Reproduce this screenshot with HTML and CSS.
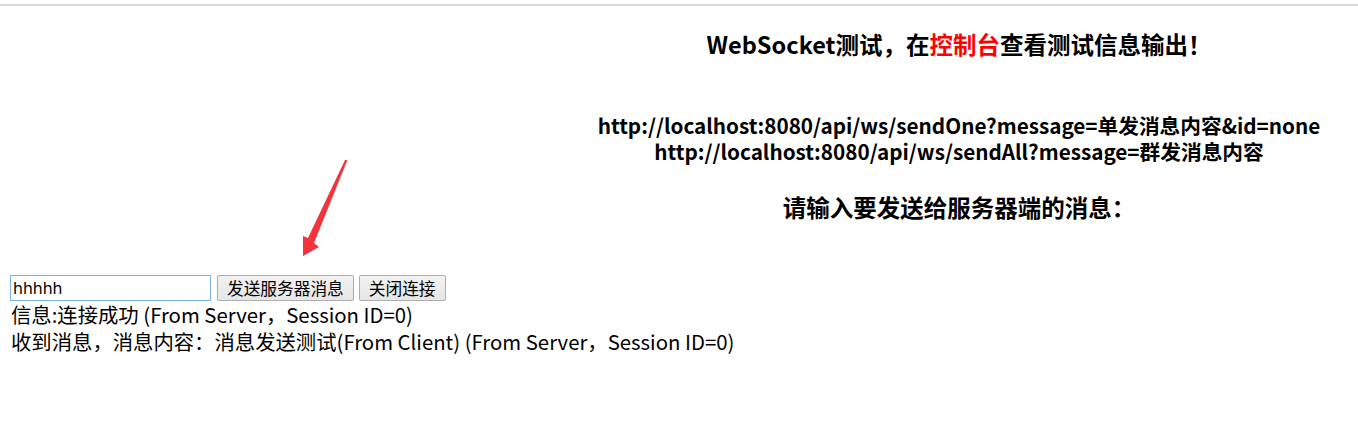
FILE: index.html
```html
<!DOCTYPE html>
<html lang="zh-CN">
<head>
    <meta charset="UTF-8">
    <title>WebSocket测试</title>
    <link rel="stylesheet" href="styles.css">
</head>
<body>
    <div class="top-line"></div>

    <!-- 说明 -->
    <div class="intro">
        <h3 class="title">WebSocket测试，在<span class="red">控制台</span>查看测试信息输出！</h3>
        <div class="urls">
            <div>http://localhost:8080/api/ws/sendOne?message=单发消息内容&amp;id=none</div>
            <div>http://localhost:8080/api/ws/sendAll?message=群发消息内容</div>
        </div>
        <h3 class="prompt">请输入要发送给服务器端的消息：</h3>
    </div>

    <!-- 操作 -->
    <div class="controls">
        <input type="text" id="text" class="msg-input" value="hhhhh">
        <button class="btn">发送服务器消息</button>
        <button class="btn">关闭连接</button>
    </div>

    <div class="messages" id="message">
        <div>信息:连接成功 (From Server，Session ID=0)</div>
        <div>收到消息，消息内容：消息发送测试(From Client) (From Server，Session ID=0)</div>
    </div>

    <!-- 标注箭头 -->
    <svg class="arrow" width="60" height="110" viewBox="0 0 60 110">
        <polygon points="57,10 55,10 18,88 13,86 13,106 29,97 24,93 57,11" fill="#f5333a"/>
    </svg>
</body>
</html>
```
FILE: styles.css
```css
* {
    margin: 0;
    padding: 0;
    box-sizing: border-box;
}

body {
    font-family: "Noto Sans CJK SC", "Noto Sans", sans-serif;
    color: #000;
    background: #fff;
    position: relative;
    min-height: 425px;
}

.top-line {
    height: 2px;
    margin-top: 4px;
    background-color: #d9d9d9;
}

/* 说明 */
.intro {
    margin-left: 560px;
    text-align: center;
}

.title {
    font-size: 23.5px;
    font-weight: bold;
    line-height: 30px;
    margin-top: 23px;
}

.red {
    color: #ff0000;
}

.urls {
    font-size: 20.7px;
    font-weight: bold;
    line-height: 26px;
    margin-top: 53px;
}

.prompt {
    font-size: 23.5px;
    font-weight: bold;
    line-height: 30px;
    margin-top: 28px;
}

/* 操作 */
.controls {
    display: flex;
    align-items: center;
    gap: 5px;
    margin-top: 53px;
    padding-left: 10px;
}

.msg-input {
    width: 201px;
    height: 26px;
    margin-right: 1px;
    border: 1px solid #7eb4ea;
    padding: 0 2px;
    font-size: 16px;
    font-family: "Noto Sans", sans-serif;
    outline: none;
}

.btn {
    height: 26px;
    padding: 0 9px;
    font-size: 16.7px;
    font-family: "Noto Sans CJK SC", sans-serif;
    background: linear-gradient(#f2f2f2, #e6e6e6);
    border: 1px solid #adadad;
    border-radius: 2px;
    line-height: 24px;
}

.messages {
    padding-left: 11px;
    font-size: 20.35px;
    line-height: 27px;
}

.arrow {
    position: absolute;
    left: 290px;
    top: 150px;
}
```
